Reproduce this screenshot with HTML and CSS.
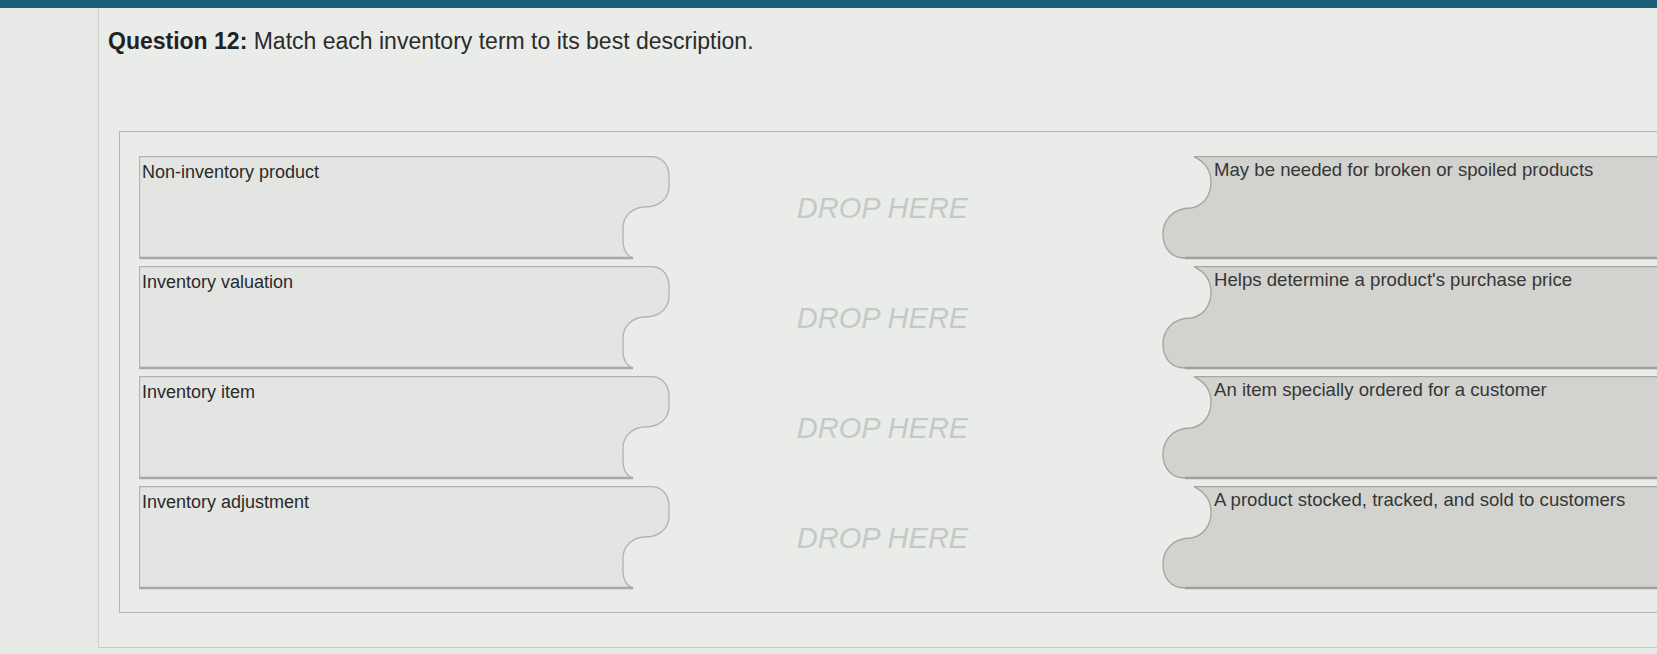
FILE: index.html
```html
<!DOCTYPE html>
<html lang="en">
<head>
    <meta charset="UTF-8">
    <meta name="viewport" content="width=device-width, initial-scale=1.0">
    <title>Question 12</title>
    <link rel="stylesheet" href="styles.css">
</head>
<body>
    <!-- puzzle piece outlines, reused by every card -->
    <svg class="defs" xmlns="http://www.w3.org/2000/svg">
        <symbol id="term-piece" viewBox="0 0 531 104">
            <path class="term-fill" d="M0.5,0.5 H512 C522,0.5 530,8 530,20 V30 C530,42 521,51 506,51 C494,51 484,60 484,72 V84 C484,94 488,100 494,102 H0.5 Z"/>
            <path class="term-base" d="M0.5,102 H494"/>
        </symbol>
        <symbol id="desc-piece" viewBox="0 0 540 104">
            <path class="desc-fill" d="M33,0.5 H540 V102 H24 C10,102 2,92 2,78 C2,64 12,52 30,52 C42,50 50,40 50,26 C50,14 44,6 33,0.5 Z"/>
            <path class="desc-base" d="M24,102 H540"/>
        </symbol>
    </svg>

    <div class="topbar"></div>

    <div class="page">
        <div class="question-panel">
            <h1 class="question"><b>Question 12:</b> Match each inventory term to its best description.</h1>

            <div class="match-box">
                <div class="term-card">
                    <svg class="piece" width="531" height="104"><use href="#term-piece"/></svg>
                    <span class="label">Non-inventory product</span>
                </div>
                <div class="drop-zone">DROP HERE</div>
                <div class="desc-card">
                    <svg class="piece" width="540" height="104"><use href="#desc-piece"/></svg>
                    <span class="label">May be needed for broken or spoiled products</span>
                </div>

                <div class="term-card">
                    <svg class="piece" width="531" height="104"><use href="#term-piece"/></svg>
                    <span class="label">Inventory valuation</span>
                </div>
                <div class="drop-zone">DROP HERE</div>
                <div class="desc-card">
                    <svg class="piece" width="540" height="104"><use href="#desc-piece"/></svg>
                    <span class="label">Helps determine a product's purchase price</span>
                </div>

                <div class="term-card">
                    <svg class="piece" width="531" height="104"><use href="#term-piece"/></svg>
                    <span class="label">Inventory item</span>
                </div>
                <div class="drop-zone">DROP HERE</div>
                <div class="desc-card">
                    <svg class="piece" width="540" height="104"><use href="#desc-piece"/></svg>
                    <span class="label">An item specially ordered for a customer</span>
                </div>

                <div class="term-card">
                    <svg class="piece" width="531" height="104"><use href="#term-piece"/></svg>
                    <span class="label">Inventory adjustment</span>
                </div>
                <div class="drop-zone">DROP HERE</div>
                <div class="desc-card">
                    <svg class="piece" width="540" height="104"><use href="#desc-piece"/></svg>
                    <span class="label">A product stocked, tracked, and sold to customers</span>
                </div>
            </div>
        </div>
    </div>
</body>
</html>
```

FILE: styles.css
```css
/* Base */
html, body {
    margin: 0;
    padding: 0;
    overflow: hidden;
}
body {
    background-color: #e6e9e6;
    color: #2e2e2e;
    font-family: 'Liberation Sans', Arial, sans-serif;
}
.defs {
    display: none;
}
.topbar {
    height: 8px;
    background-color: #1d5f78;
}
.page {
    overflow: hidden;
}

/* Question panel */
.question-panel {
    margin-left: 98px;
    padding: 20px 0 34px 9px;
    background-color: #eaece9;
    border-left: 1px solid #cfd1ce;
    border-bottom: 1px solid #c9cbc8;
    width: 1700px;
}
.question {
    margin: 0;
    font-size: 23px;
    font-weight: normal;
    line-height: 26px;
    color: #2b2b2b;
}
.question b {
    color: #222;
}

/* Matching area */
.match-box {
    margin: 77px 0 0 11px;
    padding: 24px 0 22px 19px;
    border: 1.5px solid #b5b7b4;
    display: grid;
    grid-template-columns: 531px 491px 540px;
    grid-auto-rows: 104px;
    row-gap: 6px;
}
.term-card,
.desc-card {
    display: grid;
}
.term-card > *,
.desc-card > * {
    grid-area: 1 / 1;
}
.piece {
    display: block;
}
.label {
    font-size: 18px;
    line-height: 22px;
    align-self: start;
}
.term-card .label {
    padding: 5px 0 0 3px;
    color: #2a2a2a;
}
.desc-card .label {
    padding: 3px 0 0 53px;
    font-size: 18.6px;
    color: #363636;
}

/* Piece shapes */
.term-fill {
    fill: #e3e5e2;
    stroke: #b1b3b0;
    stroke-width: 1.3;
}
.term-base {
    stroke: #a7a9a6;
    stroke-width: 2.5;
}
.desc-fill {
    fill: #d2d3cf;
    stroke: #a6a7a3;
    stroke-width: 1.4;
}
.desc-base {
    stroke: #9fa09c;
    stroke-width: 2.5;
}

/* Drop targets */
.drop-zone {
    display: flex;
    align-items: center;
    justify-content: center;
    padding-right: 66px;
    font-size: 29px;
    font-style: italic;
    color: #c5c9c6;
}
```
